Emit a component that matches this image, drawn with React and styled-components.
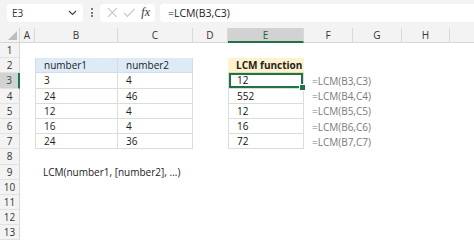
import React from 'react'
import styled, { createGlobalStyle } from 'styled-components'

const GlobalStyle = createGlobalStyle`
    html, body {
        margin: 0;
        padding: 0;
        background: #ffffff;
        overflow: hidden;
    }
    body {
        font-family: "Open Sans", "Liberation Sans", sans-serif;
        font-size: 10px;
        color: #222222;
    }
`

const columns = [
    { id: 'A', width: 15 },
    { id: 'B', width: 83 },
    { id: 'C', width: 75 },
    { id: 'D', width: 35 },
    { id: 'E', width: 76 },
    { id: 'F', width: 49 },
    { id: 'G', width: 49 },
    { id: 'H', width: 48 },
    { id: 'I', width: 60 },
]

const tableRows = [
    ['3', '4', '12', '=LCM(B3,C3)'],
    ['24', '46', '552', '=LCM(B4,C4)'],
    ['12', '4', '12', '=LCM(B5,C5)'],
    ['16', '4', '16', '=LCM(B6,C6)'],
    ['24', '36', '72', '=LCM(B7,C7)'],
]

function App() {
    return (
        <Page>
            <GlobalStyle />
            <FormulaBar>
                <NameBox>
                    <span>E3</span>
                    <svg width="9" height="6" viewBox="0 0 9 6">
                        <path d="M1 1 L4.5 4.5 L8 1" fill="none" stroke="#444" strokeWidth="1.2" />
                    </svg>
                </NameBox>
                <Dots>
                    <i />
                    <i />
                    <i />
                </Dots>
                <ActionBox>
                    <svg width="11" height="11" viewBox="0 0 11 11">
                        <path d="M1 1 L10 10 M10 1 L1 10" stroke="#c4c4c4" strokeWidth="1.1" />
                    </svg>
                    <svg width="13" height="11" viewBox="0 0 13 11">
                        <path d="M1 6 L4.5 9.5 L12 1.5" fill="none" stroke="#c4c4c4" strokeWidth="1.1" />
                    </svg>
                    <Fx>fx</Fx>
                </ActionBox>
                <FormulaInput>=LCM(B3,C3)</FormulaInput>
            </FormulaBar>

            <Sheet>
                <Corner>
                    <svg width="9" height="9" viewBox="0 0 9 9">
                        <path d="M9 0 L9 9 L0 9 Z" fill="#bdbdbd" />
                    </svg>
                </Corner>
                {columns.map((col) => (
                    <ColHeader key={col.id} $active={col.id === 'E'}>
                        {col.id === 'I' ? '' : col.id}
                    </ColHeader>
                ))}

                {Array.from({ length: 13 }, (_, i) => renderRow(i + 1))}
            </Sheet>
        </Page>
    )
}

function emptyCells(ids) {
    return ids.map((id) => <Cell key={id} />)
}

function renderRow(n) {
    const cells = []
    cells.push(
        <RowHeader key={'h' + n} $active={n === 3}>
            {n}
        </RowHeader>
    )

    if (n === 2) {
        cells.push(<Cell key="A" />)
        cells.push(<TableHead key="B">number1</TableHead>)
        cells.push(<TableHead key="C">number2</TableHead>)
        cells.push(<Cell key="D" />)
        cells.push(<ResultHead key="E">LCM function</ResultHead>)
        cells.push(...emptyCells(['F', 'G', 'H', 'I']))
    } else if (n >= 3 && n <= 7) {
        const row = tableRows[n - 3]
        cells.push(<Cell key="A" />)
        cells.push(<TableCell key="B">{row[0]}</TableCell>)
        cells.push(<TableCell key="C">{row[1]}</TableCell>)
        cells.push(<Cell key="D" />)
        cells.push(
            <ResultCell key="E" $selected={n === 3}>
                {row[2]}
                {n === 3 && <FillHandle />}
            </ResultCell>
        )
        cells.push(<FormulaText key="F">{row[3]}</FormulaText>)
        cells.push(...emptyCells(['G', 'H', 'I']))
    } else if (n === 9) {
        cells.push(<Cell key="A" />)
        cells.push(<SyntaxText key="B">LCM(number1, [number2], ...)</SyntaxText>)
        cells.push(...emptyCells(['E', 'F', 'G', 'H', 'I']))
    } else {
        cells.push(...emptyCells(columns.map((c) => c.id)))
    }

    return <Row key={'r' + n}>{cells}</Row>
}

const Page = styled.div`
    width: 474px;
    height: 242px;
    overflow: hidden;
    background: #ffffff;
`

const FormulaBar = styled.div`
    display: flex;
    align-items: center;
    height: 28px;
    padding: 0 0 3px 7px;
    box-sizing: border-box;
    background: #f3f3f3;
`

const NameBox = styled.div`
    display: flex;
    align-items: center;
    justify-content: space-between;
    width: 76px;
    height: 18px;
    padding: 0 6px 0 5px;
    box-sizing: border-box;
    background: #ffffff;
    border-radius: 4px;
    font-size: 10px;
    color: #333333;
`

const Dots = styled.div`
    display: flex;
    flex-direction: column;
    gap: 1.5px;
    margin: 0 7px 0 8px;
    i {
        display: block;
        width: 2px;
        height: 2px;
        border-radius: 50%;
        background: #555555;
    }
`

const ActionBox = styled.div`
    display: flex;
    align-items: center;
    gap: 5px;
    width: 55px;
    height: 18px;
    padding: 0 5px 0 7px;
    box-sizing: border-box;
    background: #ffffff;
    border-radius: 4px;
`

const Fx = styled.span`
    font-family: "Liberation Serif", "DejaVu Serif", serif;
    font-style: italic;
    font-size: 12px;
    color: #333333;
    margin-left: 1px;
`

const FormulaInput = styled.div`
    flex: 1;
    height: 18px;
    margin-left: 5px;
    padding-left: 8px;
    display: flex;
    align-items: center;
    background: #ffffff;
    border-radius: 4px 0 0 4px;
    font-size: 10.5px;
    color: #222222;
`

const Sheet = styled.div`
    display: grid;
    grid-template-columns: 20px ${columns.map((c) => c.width + 'px').join(' ')};
    grid-template-rows: 15px;
    grid-auto-rows: 15.2px;
`

const Row = styled.div`
    display: contents;
`

const Corner = styled.div`
    display: flex;
    align-items: flex-end;
    justify-content: flex-end;
    padding: 0 2px 2px 0;
    background: #f3f3f3;
    border-right: 1px solid #d6d6d6;
    border-bottom: 1px solid #d6d6d6;
`

const ColHeader = styled.div`
    display: flex;
    align-items: center;
    justify-content: center;
    background: ${(p) => (p.$active ? '#d2d2d2' : '#f3f3f3')};
    border-right: 1px solid #d9d9d9;
    border-bottom: ${(p) => (p.$active ? '2px solid #217346' : '1px solid #d6d6d6')};
    color: ${(p) => (p.$active ? '#1e5e3a' : '#333333')};
    font-size: 10px;
`

const RowHeader = styled.div`
    display: flex;
    align-items: center;
    justify-content: center;
    background: ${(p) => (p.$active ? '#d2d2d2' : '#f3f3f3')};
    border-right: ${(p) => (p.$active ? '2px solid #217346' : '1px solid #d6d6d6')};
    border-bottom: 1px solid #e2e2e2;
    color: ${(p) => (p.$active ? '#1e5e3a' : '#333333')};
    font-size: 10px;
`

const Cell = styled.div`
    display: flex;
    align-items: center;
    padding-left: 8px;
    white-space: nowrap;
    font-size: 10px;
    color: #222222;
`

const TableHead = styled(Cell)`
    background: #ddebf7;
    border-bottom: 1px solid #d4dce6;
    border-right: 1px solid #d4dce6;
    &:nth-child(3) {
        border-left: 1px solid #d4dce6;
    }
`

const TableCell = styled(Cell)`
    border-bottom: 1px solid #dcdcdc;
    border-right: 1px solid #dcdcdc;
    &:nth-child(3) {
        border-left: 1px solid #dcdcdc;
    }
`

const ResultHead = styled(Cell)`
    background: #fff2cc;
    font-weight: 700;
    border-bottom: 1px solid #e7dcb8;
`

const ResultCell = styled(Cell)`
    position: relative;
    border-left: 1px solid #dcdcdc;
    border-right: 1px solid #dcdcdc;
    border-bottom: 1px solid #dcdcdc;
    color: #111111;
    ${(p) => p.$selected && `box-shadow: inset 0 0 0 2px #217346;`}
`

const FillHandle = styled.span`
    position: absolute;
    right: -3px;
    bottom: -3px;
    width: 5px;
    height: 5px;
    background: #217346;
    border: 1px solid #ffffff;
    z-index: 2;
`

const FormulaText = styled(Cell)`
    color: #7a7a7a;
`

const SyntaxText = styled(Cell)`
    grid-column: span 3;
`

export default App
